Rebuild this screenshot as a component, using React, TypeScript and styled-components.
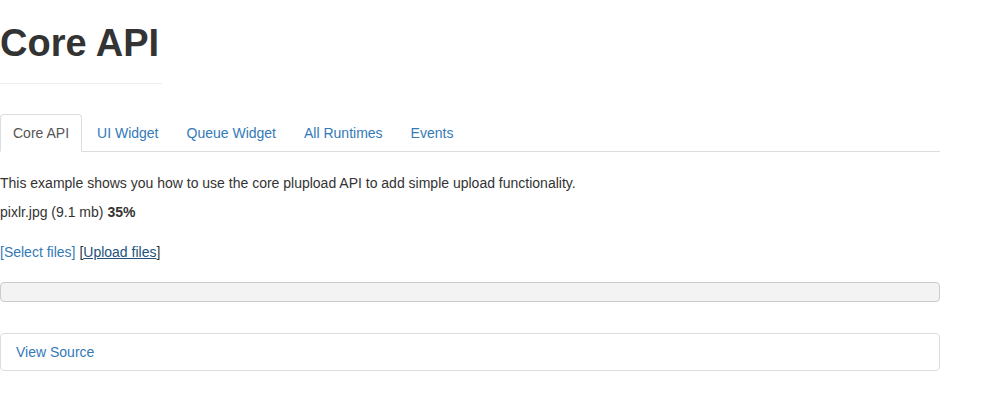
import styled, { createGlobalStyle } from "styled-components";

const GlobalStyle = createGlobalStyle`
  body {
    margin: 0;
    background: #fff;
    color: #333;
    font-family: "Liberation Sans", Arial, sans-serif;
    font-size: 14px;
    line-height: 20px;
  }
`;

const Page = styled.div`
  width: 940px;
`;

const PageHeader = styled.div`
  display: inline-block;
  padding: 23px 3px 20px 0;
  border-bottom: 1px solid #eee;
  margin-bottom: 30px;
`;

const Title = styled.h1`
  margin: 0;
  font-size: 38px;
  font-weight: bold;
  line-height: 40px;
  color: #333;
`;

const Tabs = styled.ul`
  display: flex;
  margin: 0;
  padding: 0;
  list-style: none;
  border-bottom: 1px solid #ddd;
`;

const Tab = styled.li<{ $active?: boolean }>`
  margin-bottom: -1px;
  margin-right: 2px;
  padding: 8px 12px;
  border: 1px solid ${(p) => (p.$active ? "#ddd" : "transparent")};
  border-bottom-color: ${(p) => (p.$active ? "#fff" : "transparent")};
  border-radius: 4px 4px 0 0;
  background: ${(p) => (p.$active ? "#fff" : "transparent")};
  color: ${(p) => (p.$active ? "#555" : "#337ab7")};
  cursor: pointer;
`;

const Content = styled.div`
  padding-top: 21px;
`;

const Para = styled.p`
  margin: 0 0 9px;
`;

const FileList = styled.div`
  margin-bottom: 20px;
`;

const Actions = styled.div`
  margin-bottom: 20px;
`;

const Link = styled.a<{ $focused?: boolean }>`
  color: ${(p) => (p.$focused ? "#23527c" : "#337ab7")};
  text-decoration: ${(p) => (p.$focused ? "underline" : "none")};
`;

const Progress = styled.div`
  height: 18px;
  background: #f3f3f3;
  border: 1px solid #ccc;
  border-radius: 4px;
  margin-bottom: 31px;
`;

const Panel = styled.div`
  border: 1px solid #ddd;
  border-radius: 4px;
  padding: 8px 15px;
`;

export default function App() {
  return (
    <>
      <GlobalStyle />
      <Page>
        <PageHeader>
          <Title>Core API</Title>
        </PageHeader>
        <Tabs>
          <Tab $active>Core API</Tab>
          <Tab>UI Widget</Tab>
          <Tab>Queue Widget</Tab>
          <Tab>All Runtimes</Tab>
          <Tab>Events</Tab>
        </Tabs>
        <Content>
          <Para>
            This example shows you how to use the core plupload API to add simple upload functionality.
          </Para>
          <FileList>
            pixlr.jpg (9.1 mb) <b>35%</b>
          </FileList>
          <Actions>
            <Link href="#">[Select files]</Link>{" "}
            [<Link href="#" $focused>Upload files</Link>]
          </Actions>
          <Progress />
          <Panel>
            <Link href="#">View Source</Link>
          </Panel>
        </Content>
      </Page>
    </>
  );
}
